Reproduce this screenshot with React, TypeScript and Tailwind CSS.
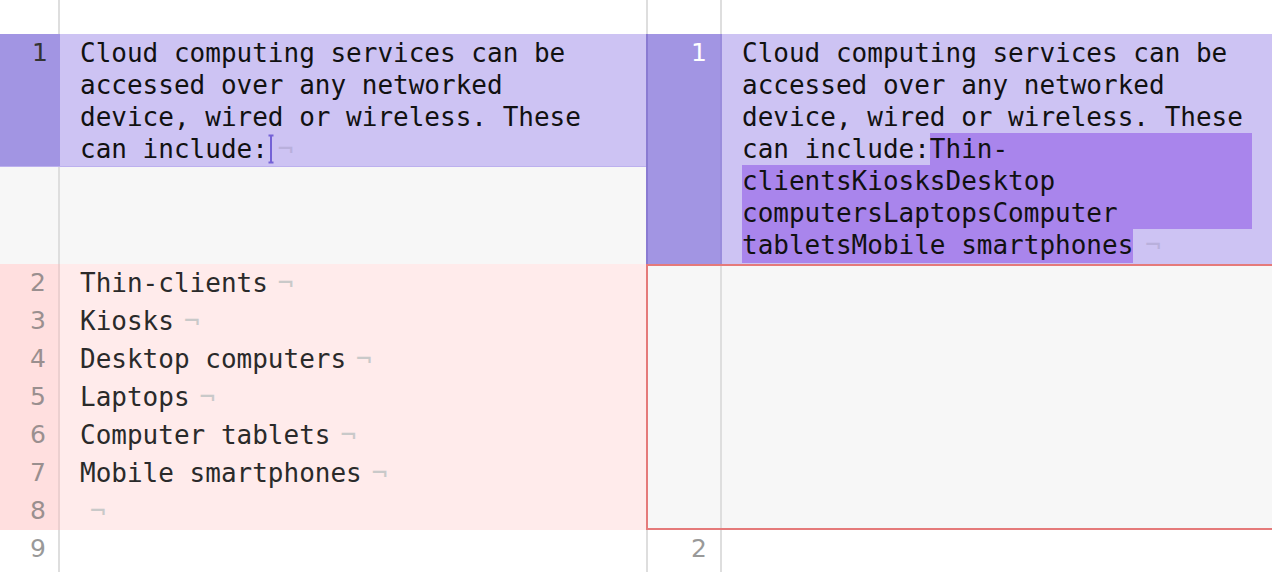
import React from "react";

const mono = { fontFamily: '"DejaVu Sans Mono", "Liberation Mono", monospace' };
const numFont = { fontFamily: '"DejaVu Sans", "Liberation Sans", sans-serif' };

function Pil() {
  return <span className="ml-[10px] text-[#c9c9c9]">¬</span>;
}

function Cursor() {
  return (
    <svg width="6" height="32" viewBox="0 0 6 32" className="inline-block align-top">
      <path d="M0.5 2.5 H5.5 M3 2.5 V29.5 M0.5 29.5 H5.5" stroke="#7462d6" strokeWidth="2" fill="none" />
    </svg>
  );
}

function Line({ children }: { children?: React.ReactNode }) {
  return <div className="h-[32px] leading-[32px] whitespace-pre flex">{children}</div>;
}

function Num({ n, cls }: { n: number | string; cls: string }) {
  return (
    <div className={"h-[32px] leading-[32px] text-right text-[25px] " + cls} style={numFont}>
      {n}
    </div>
  );
}

const hl = "bg-[#a985ec]";

export default function App() {
  const pinkRows = [
    "Thin-clients",
    "Kiosks",
    "Desktop computers",
    "Laptops",
    "Computer tablets",
    "Mobile smartphones",
    "",
  ];
  return (
    <div className="w-[1272px] h-[572px] overflow-hidden bg-white flex flex-col text-[26px] text-[#111]" style={mono}>
      {/* chunk 0: top blank */}
      <div className="flex h-[34px] shrink-0">
        <div className="w-[646px] flex">
          <div className="w-[60px] border-r-2 border-[#dedede]" />
          <div className="flex-1" />
        </div>
        <div className="w-[2px] bg-[#dedede]" />
        <div className="flex-1 flex">
          <div className="w-[74px] border-r-2 border-[#dedede]" />
          <div className="flex-1" />
        </div>
      </div>

      {/* chunk 1: row 1 */}
      <div className="flex h-[230px] shrink-0">
        <div className="w-[646px] flex flex-col">
          <div className="flex h-[133px] border-b border-[#bcb0ee]">
            <div className="w-[60px] bg-[#a295e3] pt-[3px] pr-[12px]">
              <Num n={1} cls="text-[#333]" />
            </div>
            <div className="flex-1 bg-[#cdc3f3] pl-[20px] pt-[3px]">
              <Line>Cloud computing services can be</Line>
              <Line>accessed over any networked</Line>
              <Line>device, wired or wireless. These</Line>
              <Line>
                can include:
                <Cursor />
                <span className="ml-[4px] text-[#b9b0dc]">¬</span>
              </Line>
            </div>
          </div>
          <div className="flex flex-1 bg-[#f7f7f7]">
            <div className="w-[60px] border-r-2 border-[#dedede]" />
            <div className="flex-1" />
          </div>
        </div>
        <div className="w-[2px] bg-[#8a7bd2]" />
        <div className="flex-1 flex">
          <div className="w-[74px] bg-[#a295e3] border-r-2 border-[#9a8cdc] pt-[3px] pr-[13px]">
            <Num n={1} cls="text-white" />
          </div>
          <div className="flex-1 bg-[#cdc3f3] pl-[20px] pt-[3px]">
            <div className="w-[510px]">
              <Line>Cloud computing services can be</Line>
              <Line>accessed over any networked</Line>
              <Line>device, wired or wireless. These</Line>
              <Line>
                <span>can include:</span>
                <span className={hl}>Thin-</span>
                <span className={"flex-1 " + hl} />
              </Line>
              <Line>
                <span className={"flex-1 " + hl}>clientsKiosksDesktop</span>
              </Line>
              <Line>
                <span className={"flex-1 " + hl}>computersLaptopsComputer</span>
              </Line>
              <div className="h-[34px] leading-[32px] whitespace-pre flex items-start">
                <span className={"h-[34px] " + hl}>tabletsMobile smartphones</span>
                <span className="ml-[12px] text-[#b9b0dc]">¬</span>
              </div>
            </div>
          </div>
        </div>
      </div>

      {/* chunk 2: rows 2-8 left, filler right */}
      <div className="flex h-[266px] shrink-0">
        <div className="w-[646px] flex">
          <div className="w-[60px] bg-[#ffdfdf] border-r-2 border-[#ecd0d0] pr-[12px]">
            {pinkRows.map((_, i) => (
              <div key={i} className="pt-[3px] h-[38px]">
                <Num n={i + 2} cls="text-[#9a8f8f]" />
              </div>
            ))}
          </div>
          <div className="flex-1 bg-[#ffebeb] pl-[20px] text-[#2a2a2a]">
            {pinkRows.map((t, i) => (
              <div key={i} className="pt-[3px] h-[38px]">
                <Line>
                  {t}
                  <Pil />
                </Line>
              </div>
            ))}
          </div>
        </div>
        <div className="flex-1 flex border-t-2 border-b-2 border-l-2 border-[#e57a7a] bg-[#f7f7f7]">
          <div className="w-[74px] border-r-2 border-[#dedede]" />
          <div className="flex-1" />
        </div>
      </div>

      {/* chunk 3: row 9 / row 2 */}
      <div className="flex flex-1">
        <div className="w-[646px] flex">
          <div className="w-[60px] border-r-2 border-[#dedede] pt-[3px] pr-[12px]">
            <Num n={9} cls="text-[#999]" />
          </div>
          <div className="flex-1" />
        </div>
        <div className="w-[2px] bg-[#dedede]" />
        <div className="flex-1 flex">
          <div className="w-[74px] border-r-2 border-[#dedede] pt-[3px] pr-[13px]">
            <Num n={2} cls="text-[#999]" />
          </div>
          <div className="flex-1" />
        </div>
      </div>
    </div>
  );
}
